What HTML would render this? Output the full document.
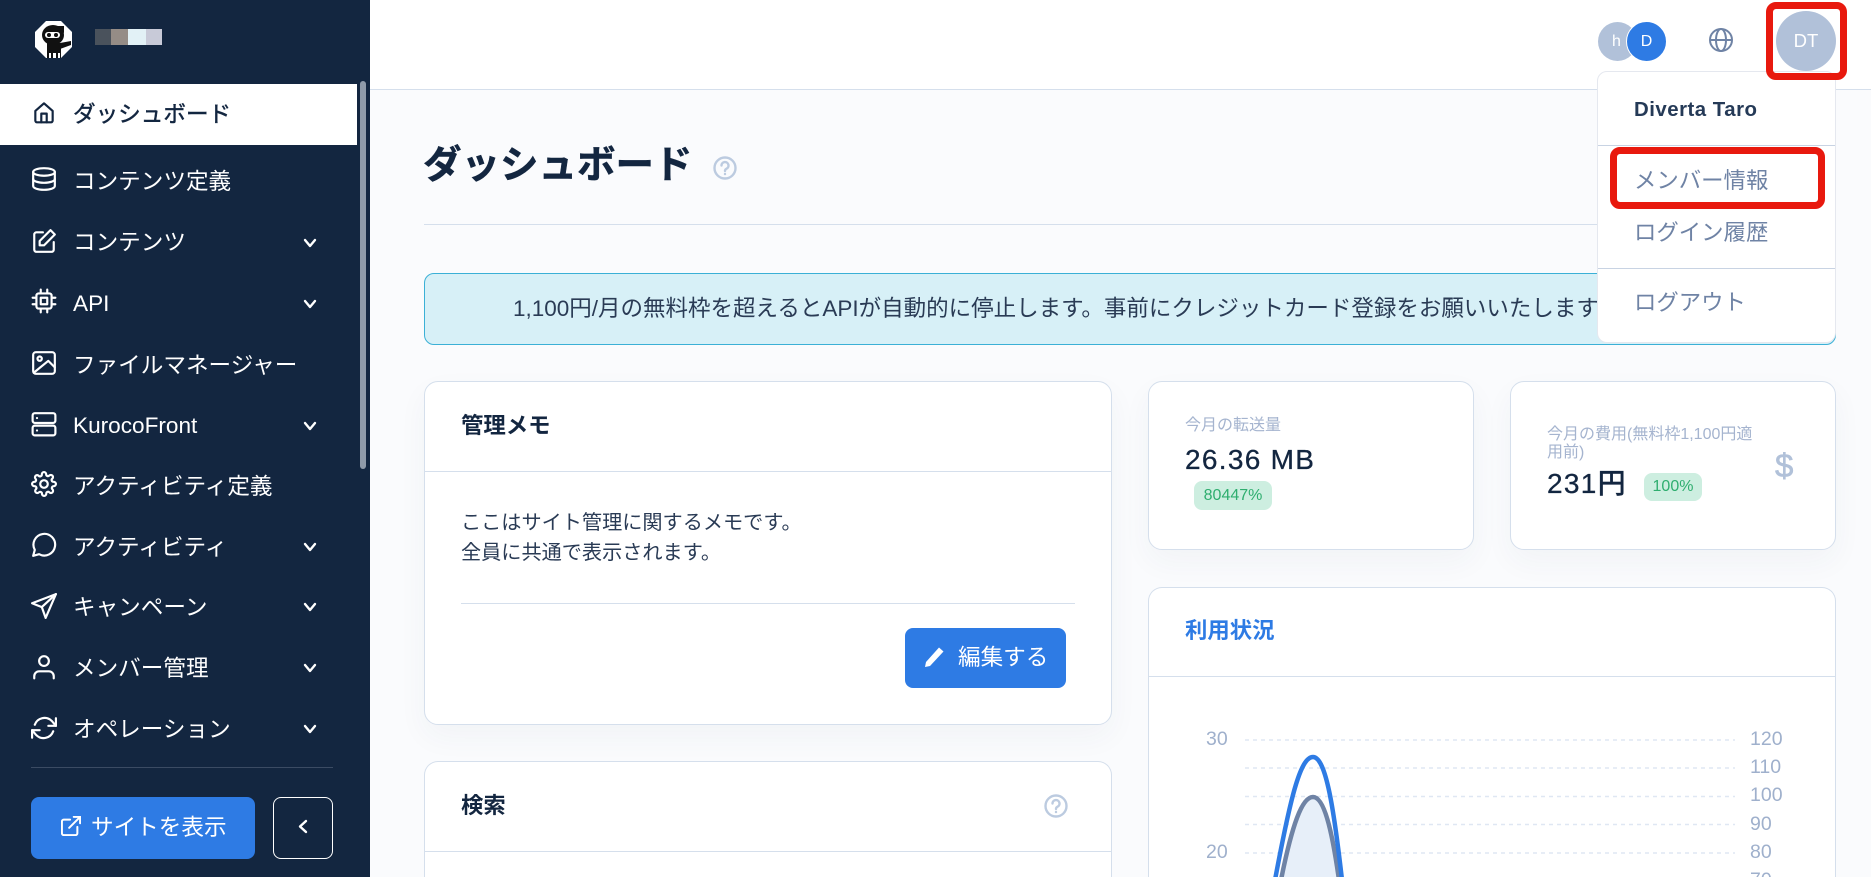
<!DOCTYPE html>
<html lang="ja"><head><meta charset="utf-8"><title>ダッシュボード</title>
<style>
*{box-sizing:border-box}
html,body{margin:0;padding:0;width:1871px;height:877px;overflow:hidden}
body{background:#fafbfd;font-family:"Liberation Sans","Noto Sans CJK JP",sans-serif;color:#132640}
#r{position:relative;width:1871px;height:877px;overflow:hidden;background:#fafbfd}
.a{position:absolute}
.t{position:absolute;line-height:30px;height:30px;white-space:nowrap;margin-top:2px}
.m{font-size:22.600px;color:#fff;left:73px}
.i{position:absolute;left:31px;width:26px;height:26px;fill:none;stroke:#fff;stroke-width:2;stroke-linecap:round;stroke-linejoin:round}
.c{position:absolute;left:303px;width:14px;height:14px;fill:none;stroke:#fff;stroke-width:2.400;stroke-linecap:round;stroke-linejoin:round}
.card{position:absolute;background:#fff;border:1px solid #d5dfec;border-radius:14px;box-shadow:0 12px 30px rgba(40,60,100,.045)}
.open{border-bottom:0;border-radius:14px 14px 0 0;box-shadow:none}
.hl{position:absolute;height:1px;background:#d5dfec}
.dd{font-size:22.400px;color:#6f83a5;left:1634px}
.badge{position:absolute;background:#cdeee0;color:#2fae6f;border-radius:8px;text-align:center;font-size:16px;line-height:29px}
.ax{position:absolute;font-size:19.500px;color:#9fb0cc;line-height:24px;height:24px}
.red{position:absolute;border:7px solid #e8190e;border-radius:10px}
.num{font-size:28px;font-weight:500;color:#132640;letter-spacing:1.300px;-webkit-text-stroke:.3px #132640}
</style></head><body><div id="r">

<div class="a" style="left:370px;top:0;width:1501px;height:90px;background:#fff;border-bottom:1px solid #d5dfec"></div>

<!-- sidebar -->
<div class="a" style="left:0;top:0;width:370px;height:877px;background:#132640"></div>
<svg class="a" style="left:35px;top:21px" width="37" height="37" viewBox="0 0 37 37">
<polygon points="11,0 26,0 37,11 37,26 26,37 11,37 0,26 0,11" fill="#fff"/>
<ellipse cx="18" cy="14" rx="11" ry="10" fill="#111"/>
<path d="M22 5l7 0 0 7z" fill="#111"/>
<rect x="12" y="22" width="14" height="10" fill="#111"/>
<path d="M25 22l11-2v4l-11 4z" fill="#111"/>
<path d="M12 32h2v5h-2zM16 32h2v5h-2zM21 32h2v5h-2zM25 32h1v5h-1z" fill="#111"/>
<rect x="10" y="11" width="15" height="6" rx="3" fill="#fff"/>
<circle cx="14" cy="14" r="2" fill="#111"/><circle cx="21" cy="14" r="2" fill="#111"/>
</svg>
<div class="a" style="left:95px;top:29px;width:16px;height:16px;background:#4a525c"></div>
<div class="a" style="left:111px;top:29px;width:17px;height:16px;background:#958c86"></div>
<div class="a" style="left:128px;top:29px;width:18px;height:16px;background:#e2f1f6"></div>
<div class="a" style="left:146px;top:29px;width:16px;height:16px;background:#c8cad8"></div>

<div class="a" style="left:0;top:84px;width:357px;height:61px;background:#fff"></div>
<div class="a" style="left:360px;top:81px;width:6px;height:388px;background:#8f9aa9;border-radius:3px"></div>

<svg class="i" style="top:99px;stroke:#132640" viewBox="0 0 24 24"><path d="M4 11l8-7 8 7v9a1.500 1.500 0 0 1-1.500 1.500h-13A1.500 1.500 0 0 1 4 20z"/><path d="M9.500 21.500V13.500h5v8"/></svg>
<div class="t m" style="top:98px;color:#132640;-webkit-text-stroke:.45px #132640">ダッシュボード</div>

<svg class="i" style="top:166px" viewBox="0 0 24 24"><ellipse cx="12" cy="5.500" rx="10" ry="3.500"/><path d="M2 5.500v13c0 2 4.500 3.500 10 3.500s10-1.500 10-3.500v-13"/><path d="M2 12c0 2 4.500 3.500 10 3.500s10-1.500 10-3.500"/></svg>
<div class="t m" style="top:165px">コンテンツ定義</div>

<svg class="i" style="top:228px" viewBox="0 0 24 24"><path d="M11 4H5a2 2 0 0 0-2 2v14a2 2 0 0 0 2 2h14a2 2 0 0 0 2-2v-7"/><path d="M18 2l4 4-10 10H8v-4z"/></svg>
<div class="t m" style="top:226px">コンテンツ</div>
<svg class="c" style="top:236px" viewBox="0 0 14 14"><path d="M2 4l5 6 5-6"/></svg>

<svg class="i" style="top:288px" viewBox="0 0 24 24"><rect x="5" y="5" width="14" height="14" rx="2"/><rect x="9" y="9" width="6" height="6"/><path d="M9 1.500v3.500M15 1.500v3.500M9 19v3.500M15 19v3.500M1.500 9H5M1.500 15H5M19 9h3.500M19 15h3.500"/></svg>
<div class="t m" style="top:287px">API</div>
<svg class="c" style="top:297px" viewBox="0 0 14 14"><path d="M2 4l5 6 5-6"/></svg>

<svg class="i" style="top:350px" viewBox="0 0 24 24"><rect x="2" y="2" width="20" height="20" rx="2.500"/><circle cx="8" cy="8" r="2"/><path d="M2.500 21L16 10l6 6"/></svg>
<div class="t m" style="top:349px">ファイルマネージャー</div>

<svg class="i" style="top:411px" viewBox="0 0 24 24"><rect x="1.500" y="2" width="21" height="9" rx="2"/><rect x="1.500" y="13.500" width="21" height="9" rx="2"/><path d="M5.500 6.500h.1M5.500 18h.1"/></svg>
<div class="t m" style="top:409px">KurocoFront</div>
<svg class="c" style="top:419px" viewBox="0 0 14 14"><path d="M2 4l5 6 5-6"/></svg>

<svg class="i" style="top:471px" viewBox="0 0 24 24"><circle cx="12" cy="12" r="3.500"/><path d="M19.400 15a1.650 1.650 0 0 0 .33 1.820l.06.06a2 2 0 1 1-2.830 2.830l-.06-.06a1.650 1.650 0 0 0-2.800 1.170V21a2 2 0 0 1-4 0v-.09A1.650 1.650 0 0 0 7.300 19.700l-.06.06a2 2 0 1 1-2.830-2.830l.06-.06A1.650 1.650 0 0 0 3.300 14H3a2 2 0 0 1 0-4h.09A1.650 1.650 0 0 0 4.300 7.300l-.06-.06a2 2 0 1 1 2.830-2.830l.06.06A1.650 1.650 0 0 0 10 3.300V3a2 2 0 0 1 4 0v.09a1.650 1.650 0 0 0 2.800 1.170l.06-.06a2 2 0 1 1 2.830 2.830l-.06.06A1.650 1.650 0 0 0 20.700 10H21a2 2 0 0 1 0 4h-.09a1.650 1.650 0 0 0-1.510 1z"/></svg>
<div class="t m" style="top:470px">アクティビティ定義</div>

<svg class="i" style="top:532px" viewBox="0 0 24 24"><path d="M2 22l1.500-5.500A10 10 0 1 1 7.500 20.500z"/></svg>
<div class="t m" style="top:531px">アクティビティ</div>
<svg class="c" style="top:540px" viewBox="0 0 14 14"><path d="M2 4l5 6 5-6"/></svg>

<svg class="i" style="top:593px" viewBox="0 0 24 24"><path d="M23 1L1 9.500l9 3.500 3.500 10z"/><path d="M23 1L10 13"/></svg>
<div class="t m" style="top:591px">キャンペーン</div>
<svg class="c" style="top:600px" viewBox="0 0 14 14"><path d="M2 4l5 6 5-6"/></svg>

<svg class="i" style="top:654px" viewBox="0 0 24 24"><circle cx="12" cy="6.500" r="4.500"/><path d="M3 22.500v-2a4.500 4.500 0 0 1 4.500-4.500h9a4.500 4.500 0 0 1 4.500 4.500v2"/></svg>
<div class="t m" style="top:652px">メンバー管理</div>
<svg class="c" style="top:661px" viewBox="0 0 14 14"><path d="M2 4l5 6 5-6"/></svg>

<svg class="i" style="top:715px" viewBox="0 0 24 24"><path d="M23 3v7h-7"/><path d="M1 21v-7h7"/><path d="M3.500 9a9.500 9.500 0 0 1 15.700-3.500L23 10M1 14l3.800 4.500A9.500 9.500 0 0 0 20.500 15"/></svg>
<div class="t m" style="top:713px">オペレーション</div>
<svg class="c" style="top:722px" viewBox="0 0 14 14"><path d="M2 4l5 6 5-6"/></svg>

<div class="a" style="left:31px;top:767px;width:302px;height:1px;background:#3b4b63"></div>
<div class="a" style="left:31px;top:797px;width:224px;height:62px;background:#2e7be4;border-radius:8px"></div>
<svg class="a" style="left:61px;top:816px;fill:none;stroke:#fff;stroke-width:2.200;stroke-linecap:round;stroke-linejoin:round" width="20" height="20" viewBox="0 0 22 22"><path d="M18 12v7a2 2 0 0 1-2 2H3a2 2 0 0 1-2-2V6a2 2 0 0 1 2-2h7"/><path d="M14 1h7v7"/><path d="M9 13L21 1"/></svg>
<div class="t" style="left:91px;top:811px;font-size:22.600px;color:#fff">サイトを表示</div>
<div class="a" style="left:273px;top:797px;width:60px;height:62px;border:1px solid #fff;border-radius:8px"></div>
<svg class="a" style="left:298px;top:819px;fill:none;stroke:#fff;stroke-width:2.400;stroke-linecap:round;stroke-linejoin:round" width="10" height="15" viewBox="0 0 10 15"><path d="M8 2L2 7.500l6 5.500"/></svg>

<!-- header -->
<div class="a" style="left:1598px;top:22px;width:39px;height:39px;border-radius:50%;background:#b1c1d9;color:#fff;font-size:16px;line-height:39px;text-align:center;padding-right:2px">h</div>
<div class="a" style="left:1626px;top:21px;width:41px;height:41px;border-radius:50%;background:#2e7be4;border:1px solid #fff;color:#fff;font-size:16px;line-height:39px;text-align:center">D</div>
<svg class="a" style="left:1709px;top:28px;fill:none;stroke:#6f83a5;stroke-width:2" width="24" height="24" viewBox="0 0 24 24"><circle cx="12" cy="12" r="11"/><ellipse cx="12" cy="12" rx="5" ry="11"/><path d="M1 12h22"/></svg>
<div class="a" style="left:1776px;top:11px;width:60px;height:60px;border-radius:50%;background:#b1c1d9;color:#fff;font-size:18.500px;line-height:60px;text-align:center">DT</div>

<!-- page -->
<div class="t" style="left:423px;top:139px;height:50px;line-height:50px;font-size:38.500px;font-weight:700;color:#132640;-webkit-text-stroke:.5px #132640">ダッシュボード</div>
<svg class="a" style="left:713px;top:156px;fill:none;stroke:#bccbe0;stroke-width:2.400" width="24" height="24" viewBox="0 0 24 24"><circle cx="12" cy="12" r="10.500"/><path d="M8.500 9.500a3.500 3.500 0 1 1 5 3.200c-1 .5-1.500 1.200-1.500 2.300" stroke-linecap="round"/><path d="M12 18v.1" stroke-linecap="round"/></svg>
<div class="hl" style="left:424px;top:224px;width:1412px"></div>

<div class="a" style="left:424px;top:273px;width:1412px;height:72px;background:#d7f0f7;border:1px solid #3bb0d6;border-radius:10px"></div>
<div class="t" style="left:513px;top:292px;font-size:22.500px;color:#2a3b55">1,100円/月の無料枠を超えるとAPIが自動的に停止します。事前にクレジットカード登録をお願いいたします。</div>

<!-- memo card -->
<div class="card" style="left:424px;top:381px;width:688px;height:344px"></div>
<div class="hl" style="left:425px;top:471px;width:686px"></div>
<div class="t" style="left:461px;top:409px;font-size:22.400px;font-weight:700">管理メモ</div>
<div class="t" style="left:461px;top:506px;font-size:20.160px;color:#2a3b55">ここはサイト管理に関するメモです。</div>
<div class="t" style="left:461px;top:536px;font-size:20.160px;color:#2a3b55">全員に共通で表示されます。</div>
<div class="hl" style="left:461px;top:603px;width:614px"></div>
<div class="a" style="left:905px;top:628px;width:161px;height:60px;background:#2e7be4;border-radius:8px"></div>
<svg class="a" style="left:924px;top:647px;fill:#fff" width="20" height="20" viewBox="0 0 20 20"><path d="M15 .5l4.500 4L6 19 1 20l1-5z"/></svg>
<div class="t" style="left:958px;top:641px;font-size:22.600px;color:#fff">編集する</div>

<!-- search card -->
<div class="card open" style="left:424px;top:761px;width:688px;height:116px"></div>
<div class="hl" style="left:425px;top:851px;width:686px"></div>
<div class="t" style="left:461px;top:789px;font-size:22.400px;font-weight:700">検索</div>
<svg class="a" style="left:1044px;top:794px;fill:none;stroke:#bccbe0;stroke-width:2.400" width="24" height="24" viewBox="0 0 24 24"><circle cx="12" cy="12" r="10.500"/><path d="M8.500 9.500a3.500 3.500 0 1 1 5 3.200c-1 .5-1.500 1.200-1.500 2.300" stroke-linecap="round"/><path d="M12 18v.1" stroke-linecap="round"/></svg>

<!-- stats -->
<div class="card" style="left:1148px;top:381px;width:326px;height:169px"></div>
<div class="t" style="left:1185px;top:409px;font-size:16px;color:#a5b4cf">今月の転送量</div>
<div class="t num" style="left:1185px;top:443px">26.36 MB</div>
<div class="badge" style="left:1194px;top:481px;width:78px;height:29px">80447%</div>

<div class="card" style="left:1510px;top:381px;width:326px;height:169px"></div>
<div class="a" style="left:1547px;top:426px;width:218px;font-size:16px;line-height:17.500px;color:#a5b4cf">今月の費用(無料枠1,100円適用前)</div>
<div class="t num" style="left:1547px;top:467px">231円</div>
<div class="badge" style="left:1644px;top:473px;width:58px;height:28px;line-height:28px">100%</div>
<div class="t" style="left:1775px;top:444px;height:40px;line-height:40px;font-size:33px;color:#b1c1d9;-webkit-text-stroke:.6px #b1c1d9">$</div>

<!-- usage -->
<div class="card open" style="left:1148px;top:587px;width:688px;height:290px"></div>
<div class="hl" style="left:1149px;top:676px;width:686px"></div>
<div class="t" style="left:1185px;top:614px;font-size:22.400px;font-weight:700;color:#2e7be4">利用状況</div>

<div class="ax" style="left:1206px;top:727px">30</div>
<div class="ax" style="left:1206px;top:840px">20</div>
<div class="ax" style="left:1750px;top:727px">120</div>
<div class="ax" style="left:1750px;top:755px">110</div>
<div class="ax" style="left:1750px;top:783px">100</div>
<div class="ax" style="left:1750px;top:812px">90</div>
<div class="ax" style="left:1750px;top:840px">80</div>
<div class="ax" style="left:1750px;top:868px;height:9px;overflow:hidden">70</div>
<svg class="a" style="left:1240px;top:730px" width="500" height="147" viewBox="1240 730 500 147">
<g stroke="#dfe7f3" stroke-width="1.500" stroke-dasharray="4 4" fill="none">
<path d="M1245 740H1735M1245 768H1735M1245 796.500H1735M1245 824.500H1735M1245 853H1735"/>
</g>
<path d="M1281 880C1292 825 1302 797 1313 797C1324 797 1332 830 1339 880Z" fill="#e7eff9"/>
<path d="M1281 880C1292 825 1302 797 1313 797C1324 797 1332 830 1339 880" fill="none" stroke="#6f83a5" stroke-width="4.500"/>
<path d="M1275 880C1290 800 1300 757 1313 757C1326 757 1334 810 1342 880" fill="none" stroke="#2e7be4" stroke-width="4.500"/>
</svg>

<!-- dropdown -->
<div class="a" style="left:1597px;top:71px;width:239px;height:272px;background:#fff;border:1px solid #e5e8ef;border-radius:10px"></div>
<div class="hl" style="left:1598px;top:145px;width:237px;background:#c8d3e3"></div>
<div class="hl" style="left:1598px;top:268px;width:237px;background:#c8d3e3"></div>
<div class="t" style="left:1634px;top:93px;font-size:20.400px;font-weight:700;color:#253a57;letter-spacing:.5px">Diverta Taro</div>
<div class="t dd" style="top:164px">メンバー情報</div>
<div class="t dd" style="top:216px">ログイン履歴</div>
<div class="t dd" style="top:286px">ログアウト</div>
<div class="red" style="left:1610px;top:147px;width:215px;height:62px"></div>
<div class="red" style="left:1766px;top:2px;width:81px;height:78px"></div>

</div></body></html>
